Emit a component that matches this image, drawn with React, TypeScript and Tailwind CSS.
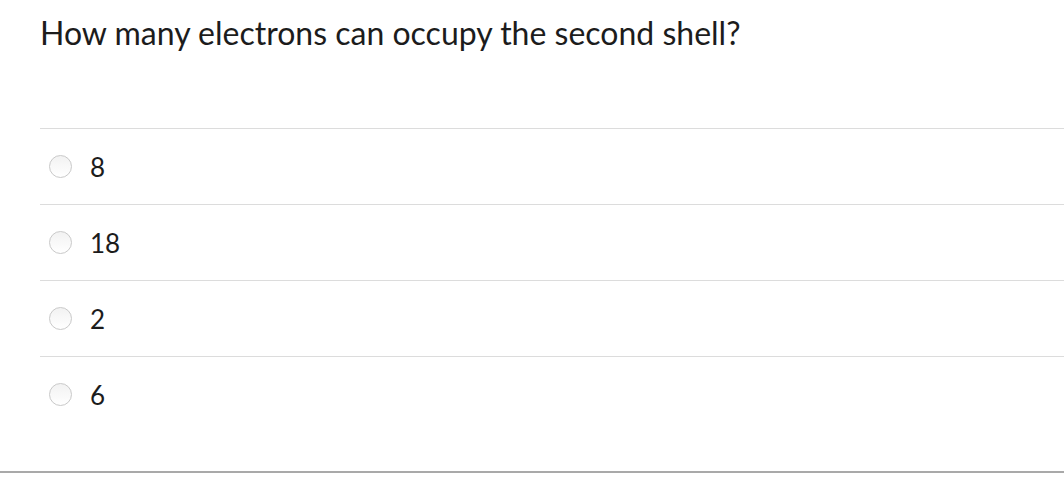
import React from "react";

const options = ["8", "18", "2", "6"];

function Radio() {
  return (
    <span className="block w-[23px] h-[23px] rounded-full border border-[#c9c9c9] bg-gradient-to-b from-[#f2f2f2] to-white shrink-0" />
  );
}

export default function App() {
  return (
    <div className="w-[1064px] h-[488px] bg-white text-[#1c1c1c]" style={{ fontFamily: "Lato, 'Noto Sans', sans-serif" }}>
      <div className="pl-[40px]">
        <div className="h-[128px] pt-[12px] text-[32px] leading-[42px]">
          How many electrons can occupy the second shell?
        </div>
        <div>
          {options.map((o) => (
            <div key={o} className="h-[76px] border-t border-[#dcdcdc] flex items-center pl-[9px] gap-[18px]">
              <Radio />
              <span className="text-[26px] leading-none">{o}</span>
            </div>
          ))}
        </div>
      </div>
      <div className="h-[39px]" />
      <div className="h-[2px] bg-[#a9a9a9]" />
    </div>
  );
}
